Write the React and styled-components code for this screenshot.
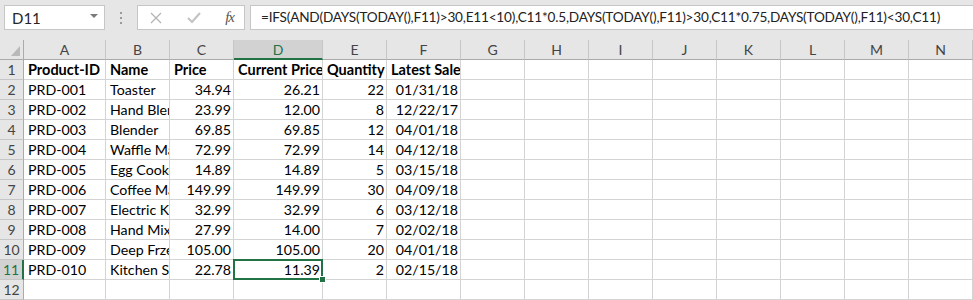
import React from 'react';
import styled, { createGlobalStyle } from 'styled-components';

const GlobalStyle = createGlobalStyle`
  body {
    margin: 0;
    background: #ffffff;
    font-family: Lato, 'Liberation Sans', Arial, sans-serif;
    overflow: hidden;
  }
`;

const GREEN = '#217346';

const columns = ['A', 'B', 'C', 'D', 'E', 'F', 'G', 'H', 'I', 'J', 'K', 'L', 'M', 'N'];
const widths = [82, 64, 64, 89, 64, 74, 64, 64, 64, 64, 64, 64, 64, 64];

const rows = [
  [{ v: 'Product-ID', b: true }, { v: 'Name', b: true }, { v: 'Price', b: true }, { v: 'Current Price', b: true }, { v: 'Quantity', b: true }, { v: 'Latest Sale', b: true }],
  ['PRD-001', 'Toaster', '34.94', '26.21', '22', '01/31/18'],
  ['PRD-002', 'Hand Blender', '23.99', '12.00', '8', '12/22/17'],
  ['PRD-003', 'Blender', '69.85', '69.85', '12', '04/01/18'],
  ['PRD-004', 'Waffle Maker', '72.99', '72.99', '14', '04/12/18'],
  ['PRD-005', 'Egg Cooker', '14.89', '14.89', '5', '03/15/18'],
  ['PRD-006', 'Coffee Maker', '149.99', '149.99', '30', '04/09/18'],
  ['PRD-007', 'Electric Kettle', '32.99', '32.99', '6', '03/12/18'],
  ['PRD-008', 'Hand Mixer', '27.99', '14.00', '7', '02/02/18'],
  ['PRD-009', 'Deep Frzeer', '105.00', '105.00', '20', '04/01/18'],
  ['PRD-010', 'Kitchen Scale', '22.78', '11.39', '2', '02/15/18'],
  [],
];

const rightAligned = [2, 3, 4, 5];

const formula =
  '=IFS(AND(DAYS(TODAY(),F11)>30,E11<10),C11*0.5,DAYS(TODAY(),F11)>30,C11*0.75,DAYS(TODAY(),F11)<30,C11)';

const TopBar = styled.div`
  height: 40px;
  background: #e6e6e6;
  display: flex;
  align-items: flex-start;
  padding: 5px 0 0 4px;
  box-sizing: border-box;
`;

const NameBox = styled.div`
  width: 101px;
  height: 25px;
  box-sizing: border-box;
  background: #fff;
  border: 1px solid #c6c6c6;
  display: flex;
  align-items: center;
  justify-content: space-between;
  padding: 0 6px 0 7px;
  font-size: 15px;
  color: #262626;
`;

const Caret = styled.span`
  width: 0;
  height: 0;
  border-left: 4px solid transparent;
  border-right: 4px solid transparent;
  border-top: 4px solid #7a7a7a;
  margin-bottom: 3px;
`;

const Grip = styled.div`
  width: 32px;
  height: 25px;
  display: flex;
  flex-direction: column;
  align-items: center;
  justify-content: center;
  gap: 3px;

  span {
    width: 2px;
    height: 2px;
    background: #9a9a9a;
  }
`;

const ButtonGroup = styled.div`
  width: 108px;
  height: 25px;
  box-sizing: border-box;
  background: #fff;
  border: 1px solid #c6c6c6;
  display: flex;
  align-items: center;
  justify-content: space-between;
  padding: 0 10px 0 12px;
`;

const Fx = styled.span`
  font-family: 'Liberation Serif', 'Times New Roman', serif;
  font-style: italic;
  font-size: 15px;
  color: #555;
  letter-spacing: -1px;
`;

const FormulaInput = styled.div`
  flex: 1;
  height: 25px;
  margin-left: 5px;
  box-sizing: border-box;
  background: #fff;
  border: 1px solid #c6c6c6;
  border-right: none;
  padding-left: 10px;
  font-size: 13.6px;
  letter-spacing: -0.2px;
  line-height: 23px;
  color: #222;
  white-space: nowrap;
  overflow: hidden;
`;

const Sheet = styled.div`
  display: grid;
  grid-template-columns: 24px ${widths.map((w) => `${w}px`).join(' ')};
  grid-auto-rows: 20px;
`;

const Corner = styled.div`
  background: #e6e6e6;
  border-right: 1px solid #ababab;
  border-bottom: 1px solid #ababab;
  position: relative;

  &::after {
    content: '';
    position: absolute;
    right: 3px;
    bottom: 3px;
    width: 0;
    height: 0;
    border-left: 9px solid transparent;
    border-bottom: 10px solid #b9b9b9;
  }
`;

const ColHeader = styled.div`
  background: ${(p) => (p.$active ? '#d2d2d2' : '#e6e6e6')};
  color: ${(p) => (p.$active ? GREEN : '#444')};
  border-right: 1px solid #c6c6c6;
  border-bottom: ${(p) => (p.$active ? `2px solid ${GREEN}` : '1px solid #ababab')};
  font-size: 14px;
  display: flex;
  align-items: center;
  justify-content: center;
  box-sizing: border-box;
  padding-top: ${(p) => (p.$active ? '1px' : '0')};
`;

const RowHeader = styled.div`
  background: ${(p) => (p.$active ? '#d2d2d2' : '#e6e6e6')};
  color: ${(p) => (p.$active ? GREEN : '#444')};
  border-right: ${(p) => (p.$active ? `2px solid ${GREEN}` : '1px solid #ababab')};
  border-bottom: 1px solid #c6c6c6;
  font-size: 14px;
  display: flex;
  align-items: center;
  justify-content: center;
  box-sizing: border-box;
`;

const Cell = styled.div`
  position: relative;
  background: #fff;
  border-right: 1px solid #d4d4d4;
  border-bottom: 1px solid #d4d4d4;
  box-sizing: border-box;
  padding: 0 2px 0 4px;
  font-size: ${(p) => (p.$bold ? '14.5px' : '14.2px')};
  font-weight: ${(p) => (p.$bold ? 700 : 400)};
  line-height: 20px;
  color: #000;
  text-align: ${(p) => (p.$right ? 'right' : 'left')};
  white-space: nowrap;
  overflow: ${(p) => (p.$selected ? 'visible' : 'hidden')};
  z-index: ${(p) => (p.$selected ? 2 : 'auto')};

  ${(p) =>
    p.$selected &&
    `
    &::before {
      content: '';
      position: absolute;
      left: -1px;
      top: -1px;
      right: -1px;
      bottom: -1px;
      border: 2px solid ${GREEN};
      pointer-events: none;
    }
    &::after {
      content: '';
      position: absolute;
      right: -4px;
      bottom: -4px;
      width: 5px;
      height: 5px;
      background: ${GREEN};
      border: 1px solid #fff;
    }
  `}
`;

const CancelIcon = () => (
  <svg width="12" height="12" viewBox="0 0 12 12">
    <path d="M1 1 L11 11 M11 1 L1 11" stroke="#b4b4b4" strokeWidth="1.3" fill="none" />
  </svg>
);

const EnterIcon = () => (
  <svg width="14" height="12" viewBox="0 0 14 12">
    <path d="M1 6 L5 10 L13 1" stroke="#c4c4c4" strokeWidth="2.2" fill="none" />
  </svg>
);

export default function App() {
  return (
    <>
      <GlobalStyle />
      <TopBar>
        <NameBox>
          <span>D11</span>
          <Caret />
        </NameBox>
        <Grip>
          <span />
          <span />
          <span />
        </Grip>
        <ButtonGroup>
          <CancelIcon />
          <EnterIcon />
          <Fx>fx</Fx>
        </ButtonGroup>
        <FormulaInput>{formula}</FormulaInput>
      </TopBar>
      <Sheet>
        <Corner />
        {columns.map((c) => (
          <ColHeader key={c} $active={c === 'D'}>
            {c}
          </ColHeader>
        ))}
        {rows.map((row, r) => (
          <React.Fragment key={r}>
            <RowHeader $active={r === 10}>{r + 1}</RowHeader>
            {columns.map((c, ci) => {
              const raw = row[ci];
              const value = raw && typeof raw === 'object' ? raw.v : raw;
              const bold = raw && typeof raw === 'object' && raw.b;
              return (
                <Cell
                  key={c}
                  $bold={bold}
                  $right={!bold && rightAligned.includes(ci)}
                  $selected={r === 10 && ci === 3}
                >
                  {value}
                </Cell>
              );
            })}
          </React.Fragment>
        ))}
      </Sheet>
    </>
  );
}
